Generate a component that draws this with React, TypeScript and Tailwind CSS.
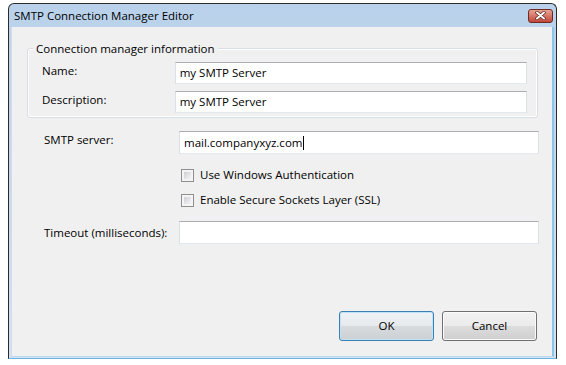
import React from 'react';

const font = { fontFamily: '"Open Sans", "Noto Sans", sans-serif' };

function TextBox({ value, focused, className }: { value?: string; focused?: boolean; className: string }) {
    return (
        <div
            className={`flex items-center pl-[4px] bg-white border border-t-[#abadb3] border-x-[#dbdfe6] border-b-[#e3e9ef] text-[11.5px] text-black ${focused ? 'border-t-[#5a8fc4] border-x-[#b5cfe7] border-b-[#c5dbef]' : ''} ${className}`}
        >
            <span>{value}</span>
            {focused && <span className="w-px h-[14px] bg-black ml-px" />}
        </div>
    );
}

function CheckBox({ label }: { label: string }) {
    return (
        <div className="flex items-center h-[16px]">
            <div className="w-[13px] h-[13px] border border-[#8e8f8f] bg-[#f4f4f4] p-[2px]">
                <div className="w-full h-full bg-gradient-to-br from-[#cbcfd5] to-[#f6f6f6]" />
            </div>
            <span className="ml-[6px] text-[11.5px] text-black">{label}</span>
        </div>
    );
}

function Button({ label, isDefault }: { label: string; isDefault?: boolean }) {
    return (
        <div
            className={`w-[95px] h-[30px] rounded-[3px] border flex items-center justify-center text-[11.5px] text-black ${isDefault ? 'border-[#3c7fb1] shadow-[inset_0_0_0_1px_#bfe3f7]' : 'border-[#707070] shadow-[inset_0_0_0_1px_#fbfbfb]'}`}
            style={{
                background: isDefault
                    ? 'linear-gradient(to bottom, #f0f3f5 0%, #e6eaed 50%, #d8dcdf 50%, #cbd0d3 100%)'
                    : 'linear-gradient(to bottom, #f2f2f2 0%, #ebebeb 50%, #dddddd 50%, #cfcfcf 100%)',
            }}
        >
            {label}
        </div>
    );
}

export default function App() {
    return (
        <div className="w-[566px] h-[365px] bg-white pt-[3px] pl-[8px]" style={font}>
            <div className="w-[549px] h-[356px] flex flex-col border border-[#2b2b2b] border-b-[#6fb3e0] rounded-t-[6px] bg-gradient-to-b from-[#b9d1ea] to-[#d2e2f2]">
                {/* title bar */}
                <div className="h-[23px] flex items-center justify-between pl-[5px] pr-[3px]">
                    <span className="text-[11.5px] text-black">SMTP Connection Manager Editor</span>
                    <div className="w-[25px] h-[14px] rounded-[3px] border border-[#6d2a23] flex items-center justify-center bg-gradient-to-b from-[#e8a393] to-[#c0463a]">
                        <svg width="11" height="9" viewBox="0 0 11 9">
                            <path d="M2 1.5 L9 7.5 M9 1.5 L2 7.5" stroke="#5a1f18" strokeWidth="3.4" strokeLinecap="round" />
                            <path d="M2 1.5 L9 7.5 M9 1.5 L2 7.5" stroke="#ffffff" strokeWidth="2" strokeLinecap="round" />
                        </svg>
                    </div>
                </div>

                {/* client area */}
                <div className="flex-1 ml-[2px] mr-[2px] mb-[1px] bg-[#f0f0f0] border-l border-[#d9d9ee] border-r-2 border-r-[#8cc4ea] border-b border-b-[#b9d9ef] flex flex-col">
                    {/* group box */}
                    <div className="relative mt-[21px] ml-[15px] w-[511px] h-[70px] rounded-[3px] border border-[#d5dfe5] shadow-[inset_0_0_0_1px_#ffffff] pl-[14px] pr-[10px] pt-[13px] flex flex-col gap-[7px]">
                        <span className="absolute -top-[9px] left-[5px] px-[3px] bg-[#f0f0f0] text-[11.5px] text-black">Connection manager information</span>
                        <div className="flex items-center">
                            <span className="w-[133px] text-[11.5px] text-black -mt-[5px]">Name:</span>
                            <TextBox value="my SMTP Server" className="w-[353px] h-[22px]" />
                        </div>
                        <div className="flex items-center">
                            <span className="w-[133px] text-[11.5px] text-black -mt-[5px]">Description:</span>
                            <TextBox value="my SMTP Server" className="w-[353px] h-[22px]" />
                        </div>
                    </div>

                    <div className="mt-[13px] ml-[32px] flex items-center">
                        <span className="w-[135px] text-[11.5px] text-black -mt-[6px]">SMTP server:</span>
                        <TextBox value="mail.companyxyz.com" focused className="w-[360px] h-[23px]" />
                    </div>

                    <div className="mt-[13px] ml-[169px] flex flex-col gap-[9px]">
                        <CheckBox label="Use Windows Authentication" />
                        <CheckBox label="Enable Secure Sockets Layer (SSL)" />
                    </div>

                    <div className="mt-[13px] ml-[32px] flex items-center">
                        <span className="w-[135px] text-[11.5px] text-black">Timeout (milliseconds):</span>
                        <TextBox className="w-[360px] h-[23px]" />
                    </div>

                    <div className="mt-[67px] mr-[15px] flex justify-end gap-[8px]">
                        <Button label="OK" isDefault />
                        <Button label="Cancel" />
                    </div>
                </div>
            </div>
        </div>
    );
}
